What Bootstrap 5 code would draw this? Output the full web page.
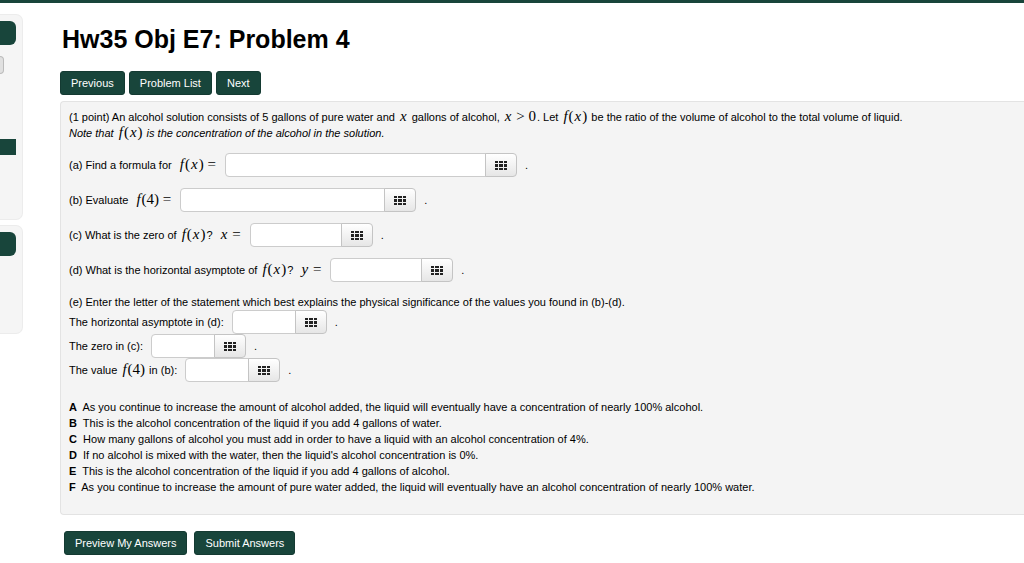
<!DOCTYPE html>
<html lang="en">
<head>
<meta charset="utf-8">
<meta name="viewport" content="width=device-width, initial-scale=1">
<title>Hw35 Obj E7: Problem 4</title>
<link href="https://cdn.jsdelivr.net/npm/bootstrap@5.3.0/dist/css/bootstrap.min.css" rel="stylesheet">
<style>
:root { --ww-green: #18453b; --ww-well: #f4f4f4; --ww-edge: #e3e3e3; }
body { font-family: "Liberation Sans", Arial, sans-serif; font-size: 11px; line-height: 16px; color: #000; background: #fff; overflow-x: hidden; }
.masthead { height: 3px; background: var(--ww-green); }
.side { width: 23px; padding-top: 11px; }
.side-panel { background: #f5f5f5; border: 1px solid #ececec; border-left: 0; border-radius: 0 7px 7px 0; padding: 6px 6px 0 0; }
.side-main { height: 206px; }
.side-extra { height: 109px; margin-top: 5px; }
.side-head { height: 24px; background: var(--ww-green); border-radius: 0 6px 6px 0; }
.side-toggle { display: block; width: 4px; height: 18px; margin-top: 11px; padding: 0; background: #e0e0e0; border: 1px solid #bbb; border-left: 0; border-radius: 0 4px 4px 0; }
.side-current { height: 16px; margin-top: 65px; background: var(--ww-green); }
.page-main { margin-left: 37px; padding-top: 20px; }
.page-title { font-size: 25px; line-height: 32px; font-weight: 700; margin: 0 0 16px; padding-left: 2px; }
.btn-ww { --bs-btn-color: #fff; --bs-btn-bg: var(--ww-green); --bs-btn-border-color: #143a32; --bs-btn-hover-color: #fff; --bs-btn-hover-bg: #12362e; --bs-btn-padding-x: 10px; --bs-btn-padding-y: 3px; --bs-btn-font-size: 11px; --bs-btn-line-height: 16px; --bs-btn-border-radius: 3px; height: 24px; }
.page-nav { gap: 4px; }
.well { margin-top: 6px; padding: 7px 8px 19px; background: var(--ww-well); border: 1px solid var(--ww-edge); border-right: 0; border-radius: 4px 0 0 4px; }
.fx { font-family: "Liberation Serif", "Times New Roman", serif; font-size: 15px; line-height: 10px; font-style: normal; white-space: nowrap; padding: 0 1px; }
.fx i { padding: 0 1px; }
.answers { display: flex; flex-direction: column; gap: 11px; margin: 12px 0; }
.answer { height: 24px; }
.answer label { white-space: pre; }
.answer .input-group { width: auto; margin: 0 8px; }
.answer .form-control { flex: none; padding: 0 4px; font-size: 11px; min-height: 0; height: 24px; border-color: #ccc; border-radius: 4px; }
.answer .btn-pad { width: 32px; height: 24px; padding: 0; border: 1px solid #c4c4c4; border-radius: 4px; background: linear-gradient(#fff, #e6e6e6); display: flex; align-items: center; justify-content: center; }
.answer .w-long { width: 261px; }
.answer .w-mid { width: 205px; }
.answer .w-short { width: 92px; }
.answer .w-letter { width: 64px; }
.choices { margin-top: 17px; }
.submit-row { gap: 7px; margin: 16px 0 8px 4px; }
</style>
</head>
<body>
<svg class="d-none" aria-hidden="true"><symbol id="pad" viewBox="0 0 12 9"><g fill="#222"><path d="M0 0h3v2H0zM4 0h4v2H4zM9 0h3v2H9zM0 3h3v3H0zM4 3h4v3H4zM9 3h3v3H9zM0 7h3v2H0zM4 7h4v2H4zM9 7h3v2H9z"/></g></symbol></svg>
<header class="masthead"></header>
<div class="d-flex">
<aside class="side flex-shrink-0">
<div class="side-panel side-main"><div class="side-head"></div><button class="side-toggle" type="button" aria-label="Menu"></button><div class="side-current"></div></div>
<div class="side-panel side-extra"><div class="side-head"></div></div>
</aside>
<main class="page-main flex-grow-1">
<h1 class="page-title">Hw35 Obj E7: Problem 4</h1>
<nav class="page-nav d-flex"><button class="btn btn-ww" type="button">Previous</button><button class="btn btn-ww" type="button">Problem List</button><button class="btn btn-ww" type="button">Next</button></nav>
<form>
<section class="well">
<div>(1 point) An alcohol solution consists of 5 gallons of pure water and <span class="fx"><i>x</i></span> gallons of alcohol, <span class="fx"><i>x</i> &gt; 0</span>. Let <span class="fx"><i>f</i>(<i>x</i>)</span> be the ratio of the volume of alcohol to the total volume of liquid.</div>
<div><em>Note that <span class="fx"><i>f</i>(<i>x</i>)</span> is the concentration of the alcohol in the solution.</em></div>
<div class="answers">
<div class="answer d-flex align-items-center"><label for="a">(a) Find a formula for  <span class="fx"><i>f</i>(<i>x</i>) =</span></label><div class="input-group"><input id="a" type="text" class="form-control w-long"><button class="btn btn-pad" type="button" aria-label="Keypad"><svg width="12" height="9"><use href="#pad"/></svg></button></div>.</div>
<div class="answer d-flex align-items-center"><label for="b">(b) Evaluate  <span class="fx"><i>f</i>(4) =</span></label><div class="input-group"><input id="b" type="text" class="form-control w-mid"><button class="btn btn-pad" type="button" aria-label="Keypad"><svg width="12" height="9"><use href="#pad"/></svg></button></div>.</div>
<div class="answer d-flex align-items-center"><label for="c">(c) What is the zero of <span class="fx"><i>f</i>(<i>x</i>)</span>?  <span class="fx"><i>x</i> =</span></label><div class="input-group"><input id="c" type="text" class="form-control w-short"><button class="btn btn-pad" type="button" aria-label="Keypad"><svg width="12" height="9"><use href="#pad"/></svg></button></div>.</div>
<div class="answer d-flex align-items-center"><label for="d">(d) What is the horizontal asymptote of <span class="fx"><i>f</i>(<i>x</i>)</span>?  <span class="fx"><i>y</i> =</span></label><div class="input-group"><input id="d" type="text" class="form-control w-short"><button class="btn btn-pad" type="button" aria-label="Keypad"><svg width="12" height="9"><use href="#pad"/></svg></button></div>.</div>
</div>
<div>(e) Enter the letter of the statement which best explains the physical significance of the values you found in (b)-(d).</div>
<div class="answer d-flex align-items-center"><label for="e1">The horizontal asymptote in (d):</label><div class="input-group"><input id="e1" type="text" class="form-control w-letter"><button class="btn btn-pad" type="button" aria-label="Keypad"><svg width="12" height="9"><use href="#pad"/></svg></button></div>.</div>
<div class="answer d-flex align-items-center"><label for="e2">The zero in (c):</label><div class="input-group"><input id="e2" type="text" class="form-control w-letter"><button class="btn btn-pad" type="button" aria-label="Keypad"><svg width="12" height="9"><use href="#pad"/></svg></button></div>.</div>
<div class="answer d-flex align-items-center"><label for="e3">The value <span class="fx"><i>f</i>(4)</span> in (b):</label><div class="input-group"><input id="e3" type="text" class="form-control w-letter"><button class="btn btn-pad" type="button" aria-label="Keypad"><svg width="12" height="9"><use href="#pad"/></svg></button></div>.</div>
<div class="choices">
<div><b>A</b>&nbsp; As you continue to increase the amount of alcohol added, the liquid will eventually have a concentration of nearly 100% alcohol.</div>
<div><b>B</b>&nbsp; This is the alcohol concentration of the liquid if you add 4 gallons of water.</div>
<div><b>C</b>&nbsp; How many gallons of alcohol you must add in order to have a liquid with an alcohol concentration of 4%.</div>
<div><b>D</b>&nbsp; If no alcohol is mixed with the water, then the liquid's alcohol concentration is 0%.</div>
<div><b>E</b>&nbsp; This is the alcohol concentration of the liquid if you add 4 gallons of alcohol.</div>
<div><b>F</b>&nbsp; As you continue to increase the amount of pure water added, the liquid will eventually have an alcohol concentration of nearly 100% water.</div>
</div>
</section>
<div class="submit-row d-flex"><button class="btn btn-ww" type="button">Preview My Answers</button><button class="btn btn-ww" type="submit">Submit Answers</button></div>
</form>
</main>
</div>
<script src="https://cdn.jsdelivr.net/npm/bootstrap@5.3.0/dist/js/bootstrap.bundle.min.js"></script>
</body>
</html>
